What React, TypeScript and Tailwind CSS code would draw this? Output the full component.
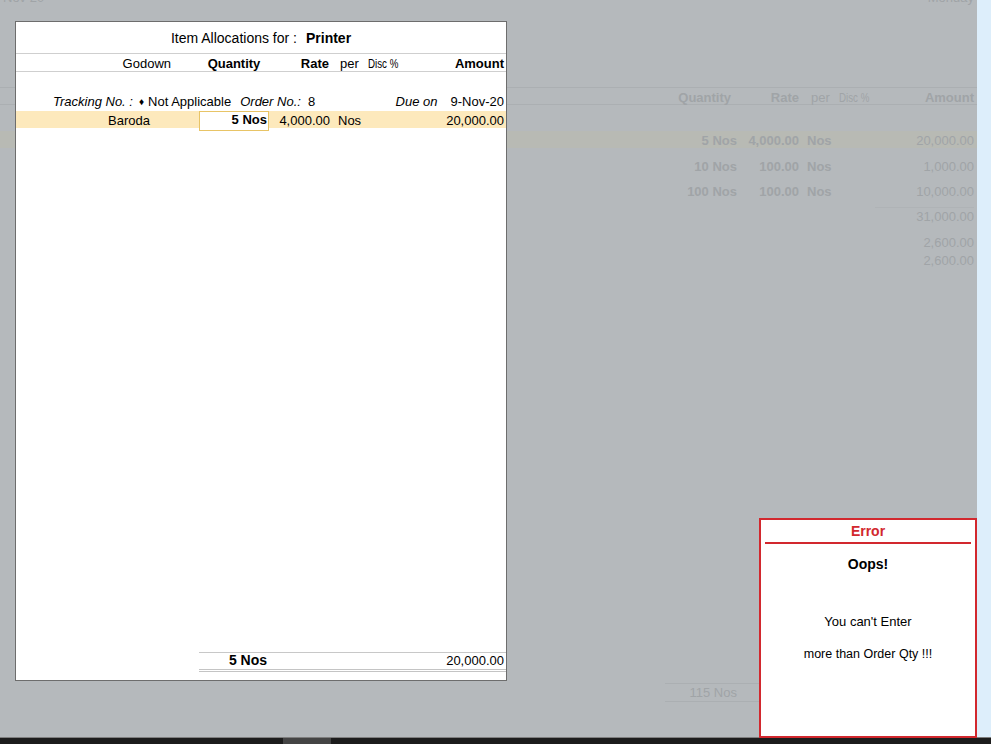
export default function App() {
  const ghost = "text-[#a0a4a7]";
  const cols = "grid grid-cols-[1fr_70px_62px_36px_40px_99px] pr-[3px] items-center";
  return (
    <div className="relative w-[991px] h-[744px] overflow-hidden bg-[#b5b9bc] font-['Liberation_Sans',Arial,sans-serif] text-[13px] text-black">
      <div className="flex h-[737px]">
        {/* Background voucher (dimmed) */}
        <div className={`flex w-[977px] flex-col ${ghost}`}>
          <div className="-mt-[10px] flex justify-between px-[3px] leading-[16px]">
            <span>Nov 20</span>
            <span>Monday</span>
          </div>
          <div className={`${cols} mt-[81px] h-[18px] border-y border-[#abafb2] font-bold`}>
            <span />
            <span className="pr-[6px] text-right">Quantity</span>
            <span className="text-right">Rate</span>
            <span className="pl-[12px] font-normal">per</span>
            <span className="overflow-visible whitespace-nowrap pl-[4px] font-normal">
              <span className="inline-block origin-left scale-x-75 whitespace-nowrap">Disc %</span>
            </span>
            <span className="text-right">Amount</span>
          </div>
          <div className={`${cols} mt-[26px] h-[17px] bg-[#b8bab4]`}>
            <span />
            <span className="text-right font-bold">5 Nos</span>
            <span className="text-right font-bold">4,000.00</span>
            <span className="pl-[8px] font-bold">Nos</span>
            <span />
            <span className="text-right">20,000.00</span>
          </div>
          <div className={`${cols} mt-[9px] h-[17px]`}>
            <span />
            <span className="text-right font-bold">10 Nos</span>
            <span className="text-right font-bold">100.00</span>
            <span className="pl-[8px] font-bold">Nos</span>
            <span />
            <span className="text-right">1,000.00</span>
          </div>
          <div className={`${cols} mt-[8px] h-[17px]`}>
            <span />
            <span className="text-right font-bold">100 Nos</span>
            <span className="text-right font-bold">100.00</span>
            <span className="pl-[8px] font-bold">Nos</span>
            <span />
            <span className="text-right">10,000.00</span>
          </div>
          <div className={`${cols} mt-[8px] h-[18px]`}>
            <span />
            <span />
            <span />
            <span />
            <span />
            <span className="h-full border-t border-[#afb3b6] text-right leading-[17px]">31,000.00</span>
          </div>
          <div className={`${cols} mt-[8px] h-[17px]`}>
            <span />
            <span />
            <span />
            <span />
            <span />
            <span className="text-right">2,600.00</span>
          </div>
          <div className={`${cols} mt-[1px] h-[17px]`}>
            <span />
            <span />
            <span />
            <span />
            <span />
            <span className="text-right">2,600.00</span>
          </div>
          <div className={`${cols} mt-auto mb-[35px] h-[19px]`}>
            <span />
            <span className="-ml-[2px] h-full border-y border-[#abafb2] text-right leading-[17px]">115 Nos</span>
            <span className="h-full border-y border-[#abafb2]" />
            <span />
            <span />
            <span />
          </div>
        </div>
        <div className="w-[14px] bg-[#ddeefb]" />
      </div>

      {/* Taskbar strip */}
      <div className="flex h-[7px] border-t border-[#7e7e7e] bg-[#1c1c1c]">
        <div className="ml-[283px] w-[48px] bg-[#444]" />
      </div>

      {/* Item Allocations popup */}
      <div className="absolute left-[15px] top-[21px] flex h-[660px] w-[492px] flex-col border border-[#6d6d6d] bg-white">
        <div className="flex h-[32px] items-center justify-center border-b border-[#cfcfcf] pt-[1px] text-[14px]">
          <span>Item Allocations for :</span>
          <span className="ml-[9px] font-bold">Printer</span>
        </div>
        <div className="grid h-[18px] grid-cols-[183px_70px_62px_34px_40px_1fr] items-center border-b border-[#cfcfcf]">
          <span className="pr-[28px] text-right">Godown</span>
          <span className="text-center font-bold">Quantity</span>
          <span className="pr-[2px] text-right font-bold">Rate</span>
          <span className="pl-[9px]">per</span>
          <span className="whitespace-nowrap pl-[3px]">
            <span className="inline-block origin-left scale-x-75 whitespace-nowrap">Disc %</span>
          </span>
          <span className="pr-[2px] text-right font-bold">Amount</span>
        </div>
        <div className="mt-[22px] flex h-[15px] items-center pl-[37px] pr-[2px]">
          <span className="italic">Tracking No. :</span>
          <span className="ml-[6px] text-[10px]">♦</span>
          <span className="ml-[4px]">Not Applicable</span>
          <span className="ml-[9px] italic">Order No.:</span>
          <span className="ml-[7px]">8</span>
          <span className="ml-auto italic">Due on</span>
          <span className="ml-[13px]">9-Nov-20</span>
        </div>
        <div className="mt-[2px] grid h-[17px] grid-cols-[183px_70px_62px_34px_40px_1fr] items-center bg-[#fde9bc]">
          <span className="pl-[92px]">Baroda</span>
          <span className="h-full border border-[#e8c466] bg-white pr-[1px] text-right font-bold leading-[15px]">5 Nos</span>
          <span className="pr-[1px] text-right">4,000.00</span>
          <span className="pl-[7px]">Nos</span>
          <span />
          <span className="pr-[2px] text-right">20,000.00</span>
        </div>
        <div className="mt-auto mb-[8px] ml-[183px] grid h-[20px] grid-cols-[70px_1fr] items-center border-y border-[#c8c8c8] border-b-[3px] border-b-[#c4c4c4] pb-[2px] [border-bottom-style:double]">
          <span className="pr-[2px] text-right text-[14px] leading-[15px] font-bold">5 Nos</span>
          <span className="pr-[2px] text-right leading-[15px]">20,000.00</span>
        </div>
      </div>

      {/* Error popup */}
      <div className="absolute left-[759px] top-[518px] flex h-[220px] w-[218px] flex-col items-center border-2 border-[#d2282e] bg-white">
        <div className="w-[206px] border-b-2 border-[#d2282e] pt-[2px] pb-[2px] text-center text-[14px] leading-[18px] font-bold text-[#d2282e]">
          Error
        </div>
        <div className="mt-[12px] text-[14px] leading-[16px] font-bold">Oops!</div>
        <div className="mt-[42px] leading-[16px]">You can't Enter</div>
        <div className="mt-[16px] text-[12.5px] leading-[16px]">more than Order Qty !!!</div>
      </div>
    </div>
  );
}
